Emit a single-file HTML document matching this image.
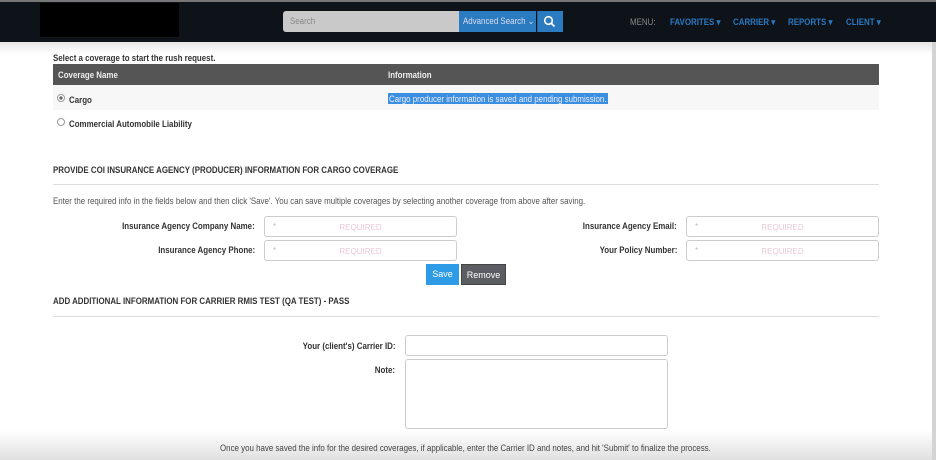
<!DOCTYPE html>
<html><head><meta charset="utf-8"><style>
*{margin:0;padding:0;box-sizing:border-box}
body{width:936px;height:460px;overflow:hidden;background:#fff;font-family:"Liberation Sans",sans-serif;color:#333;position:relative;font-size:9px}
.a{position:absolute;white-space:nowrap}
.t{transform:scaleX(0.88);transform-origin:0 0}
.rt{transform:scaleX(0.88);transform-origin:100% 0;text-align:right}
.b{font-weight:bold}
.inp{position:absolute;border:1px solid #ccc;border-radius:3px;background:#fff;height:21px}
.inp .s{position:absolute;left:8px;top:5px;color:#bbb;font-size:8px}
.inp .r{position:absolute;left:0;right:0;top:6px;text-align:center;color:#e8c8d8;font-size:8px}
</style></head><body>
<div class="a" style="left:0;top:0;width:936px;height:42px;background:#0e1319;border-top:2px solid #777"></div>
<div class="a" style="left:40px;top:3px;width:139px;height:34px;background:#000"></div>
<div class="a" style="left:283px;top:11px;width:176px;height:21px;background:#c9c9c9;border-radius:3px 0 0 3px"></div>
<div class="a t" style="left:290px;top:16px;color:#888;font-size:9px">Search</div>
<div class="a" style="left:459px;top:11px;width:77px;height:21px;background:#2a7bbf"></div>
<div class="a t" style="left:463px;top:16px;color:#dde;font-size:9px">Advanced Search ⌄</div>
<div class="a" style="left:537px;top:11px;width:26px;height:21px;background:#2a7bbf;border-left:1px solid #1e5f95"></div>
<svg class="a" style="left:543px;top:15px" width="13" height="13" viewBox="0 0 13 13"><circle cx="5.5" cy="5.5" r="3.8" fill="none" stroke="#fff" stroke-width="1.6"/><path d="M8.3 8.3L11.5 11.5" stroke="#fff" stroke-width="1.8"/></svg>
<div class="a t" style="left:630px;top:17px;color:#888;font-size:9px">MENU:</div>
<div class="a b t" style="left:670px;top:17px;color:#2a78c0;font-size:9px">FAVORITES ▾</div>
<div class="a b t" style="left:733px;top:17px;color:#2a78c0;font-size:9px">CARRIER ▾</div>
<div class="a b t" style="left:788px;top:17px;color:#2a78c0;font-size:9px">REPORTS ▾</div>
<div class="a b t" style="left:846px;top:17px;color:#2a78c0;font-size:9px">CLIENT ▾</div>
<div class="a" style="left:0;top:42px;width:932px;height:12px;background:linear-gradient(#e6e6e6,#fff)"></div>
<div class="a" style="left:932px;top:42px;width:4px;height:418px;background:#d4d4d4"></div>
<div class="a" style="left:0;top:430px;width:932px;height:30px;background:linear-gradient(#fff,#e0e0e0)"></div>

<div class="a b t" style="left:53px;top:53px">Select a coverage to start the rush request.</div>
<div class="a" style="left:53px;top:64px;width:826px;height:21px;background:#555"></div>
<div class="a b t" style="left:58px;top:70px;color:#eee">Coverage Name</div>
<div class="a b t" style="left:388px;top:70px;color:#eee">Information</div>
<div class="a" style="left:53px;top:85px;width:826px;height:25px;background:#f7f7f7"></div>
<div class="a" style="left:57px;top:94px;width:8px;height:8px;border:1px solid #999;border-radius:50%;background:radial-gradient(#666 35%,#fff 45%)"></div>
<div class="a b t" style="left:69px;top:95px">Cargo</div>
<div class="a" style="left:388px;top:93px;width:220px;height:11px;background:#3b8fe0"></div>
<div class="a t" style="left:389px;top:94px;color:#eef;font-size:9px">Cargo producer information is saved and pending submission.</div>
<div class="a" style="left:57px;top:118px;width:8px;height:8px;border:1px solid #999;border-radius:50%;background:#fff"></div>
<div class="a b t" style="left:69px;top:119px">Commercial Automobile Liability</div>

<div class="a b t" style="left:53px;top:165px">PROVIDE COI INSURANCE AGENCY (PRODUCER) INFORMATION FOR CARGO COVERAGE</div>
<div class="a" style="left:53px;top:184px;width:826px;height:1px;background:#ddd"></div>
<div class="a t" style="left:53px;top:196px;color:#555">Enter the required info in the fields below and then click 'Save'. You can save multiple coverages by selecting another coverage from above after saving.</div>

<div class="a b rt" style="right:681px;top:221px">Insurance Agency Company Name:</div>
<div class="a b rt" style="right:681px;top:245px">Insurance Agency Phone:</div>
<div class="a b rt" style="right:259px;top:221px">Insurance Agency Email:</div>
<div class="a b rt" style="right:259px;top:245px">Your Policy Number:</div>
<div class="inp" style="left:264px;top:216px;width:193px"><span class="s">*</span><div class="r">REQUIRED</div></div>
<div class="inp" style="left:264px;top:240px;width:193px"><span class="s">*</span><div class="r">REQUIRED</div></div>
<div class="inp" style="left:686px;top:216px;width:193px"><span class="s">*</span><div class="r">REQUIRED</div></div>
<div class="inp" style="left:686px;top:240px;width:193px"><span class="s">*</span><div class="r">REQUIRED</div></div>
<div class="a" style="left:426px;top:264px;width:33px;height:21px;background:#2d9be6;color:#fff;text-align:center;line-height:21px">Save</div>
<div class="a" style="left:461px;top:264px;width:45px;height:21px;background:#5a5d61;color:#fff;text-align:center;line-height:21px;border:1px solid #444">Remove</div>

<div class="a b t" style="left:53px;top:296px">ADD ADDITIONAL INFORMATION FOR CARRIER RMIS TEST (QA TEST) - PASS</div>
<div class="a" style="left:53px;top:316px;width:826px;height:1px;background:#ddd"></div>
<div class="a b rt" style="right:541px;top:341px">Your (client's) Carrier ID:</div>
<div class="inp" style="left:405px;top:335px;width:263px"></div>
<div class="a b rt" style="right:541px;top:365px">Note:</div>
<div class="inp" style="left:405px;top:359px;width:263px;height:70px"></div>
<div class="a t" style="left:220px;top:443px;color:#444">Once you have saved the info for the desired coverages, if applicable, enter the Carrier ID and notes, and hit 'Submit' to finalize the process.</div>
</body></html>
